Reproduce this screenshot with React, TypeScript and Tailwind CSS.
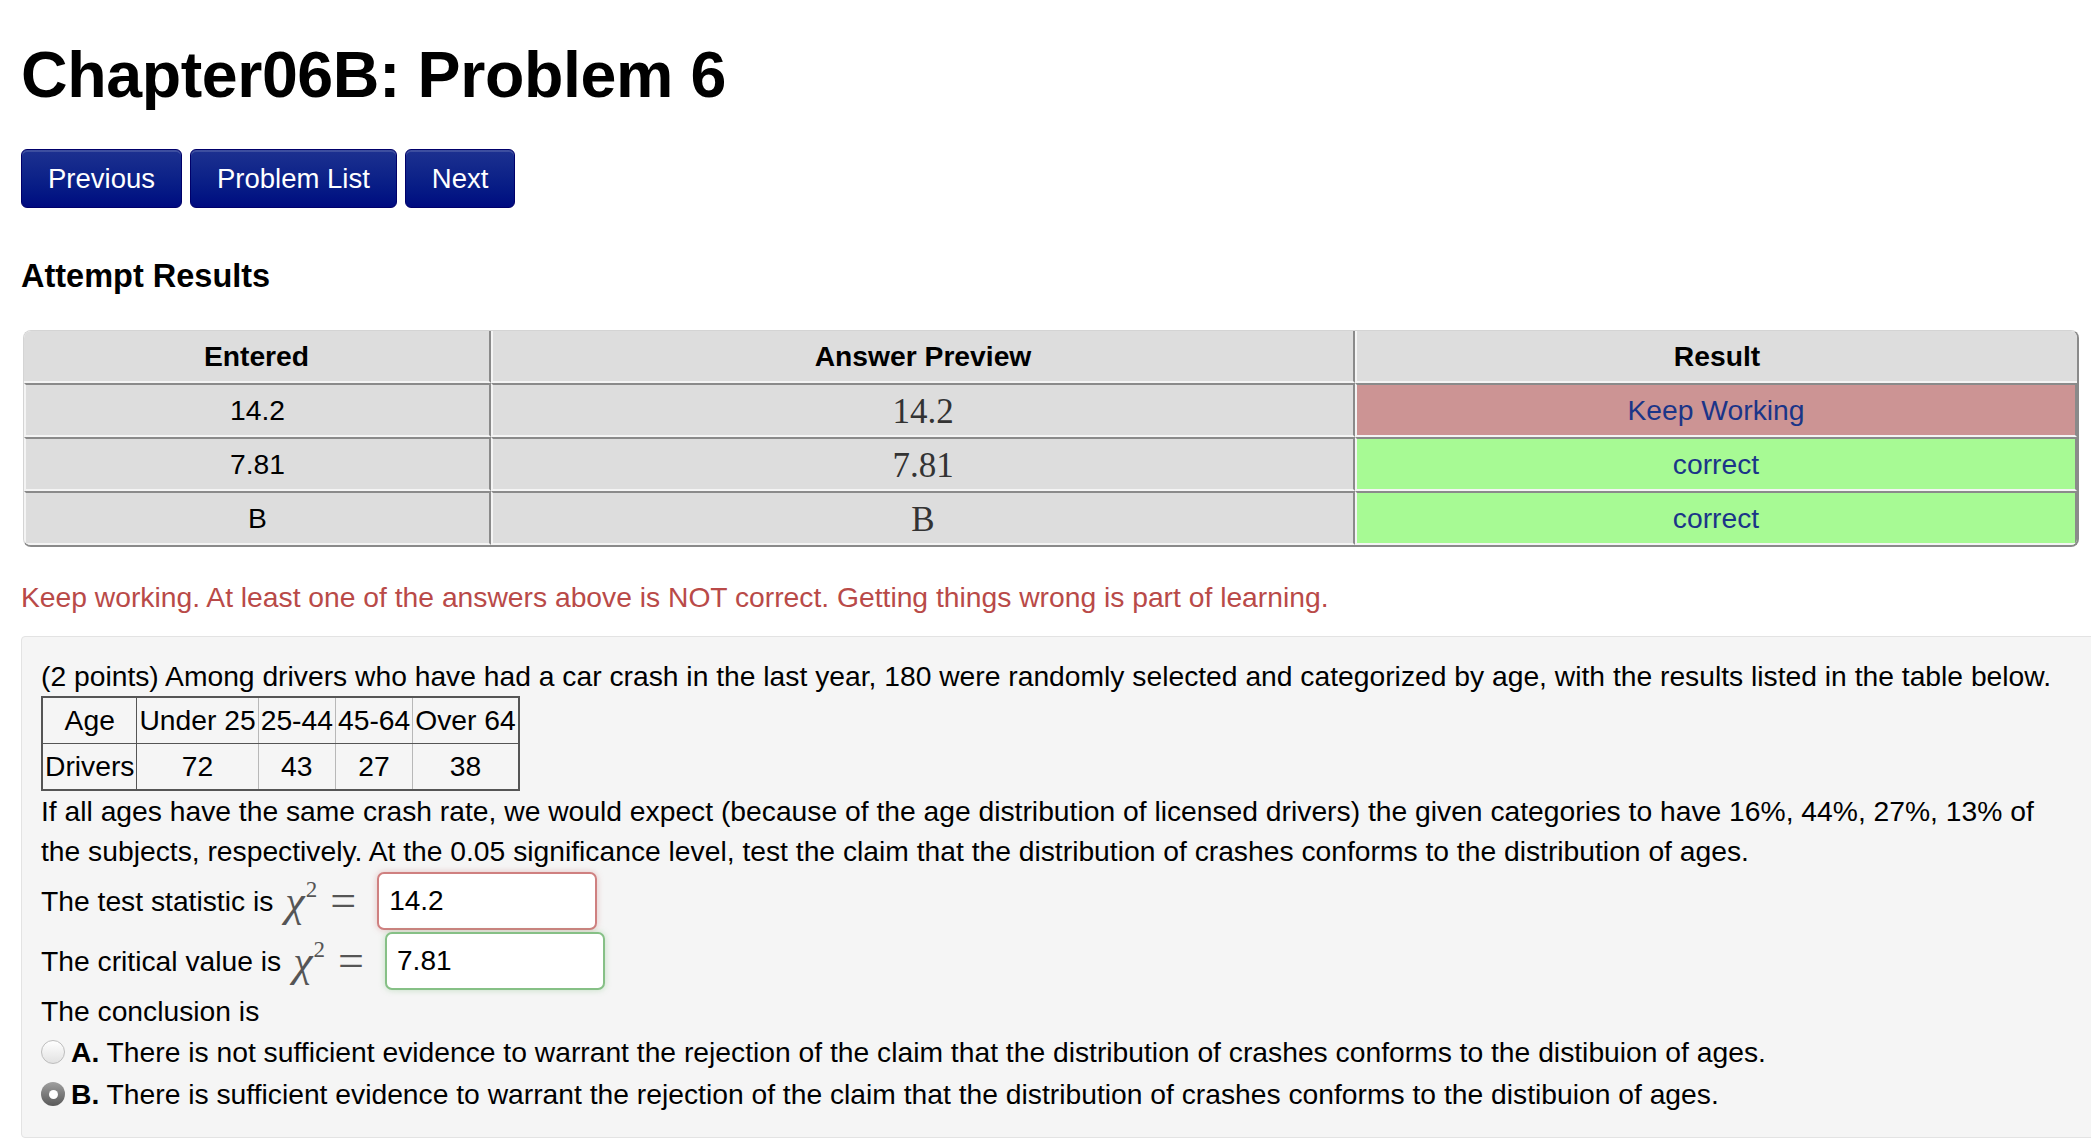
import React from 'react'

const cell = "border-t-2 border-r-2 border-b-2 border-l-2 border-t-[#8a8a8a] border-r-[#8a8a8a] border-b-[#f4f4f4] border-l-[#f4f4f4] text-center"

function Chi() {
  return (
    <span className="font-['Liberation_Serif',serif] text-[#555] ml-[12px] mr-[21px] inline-flex items-baseline">
      <i className="text-[44px] leading-[40px]">χ</i>
      <span className="text-[23px] leading-[22px] relative -top-[19px] ml-[1px]">2</span>
      <span className="text-[46px] leading-[40px] ml-[13px]">=</span>
    </span>
  )
}

function Radio({ checked }: { checked?: boolean }) {
  if (checked) {
    return (
      <span className="inline-flex w-[24px] h-[24px] rounded-full bg-gradient-to-b from-[#a0a0a0] to-[#5a5a5a] items-center justify-center mr-[6px] shrink-0">
        <span className="w-[9px] h-[9px] rounded-full bg-white" />
      </span>
    )
  }
  return <span className="inline-block w-[24px] h-[24px] rounded-full border border-[#bdbdbd] bg-gradient-to-b from-[#ffffff] to-[#e2e2e2] mr-[6px] shrink-0" />
}

export default function App() {
  const rows = [
    { entered: "14.2", preview: "14.2", result: "Keep Working", bad: true },
    { entered: "7.81", preview: "7.81", result: "correct", bad: false },
    { entered: "B", preview: "B", result: "correct", bad: false },
  ]
  const ages = ["Age", "Under 25", "25-44", "45-64", "Over 64"]
  const drivers = ["Drivers", "72", "43", "27", "38"]

  return (
    <div className="min-h-screen bg-white font-['Liberation_Sans',Arial,sans-serif] text-[28.25px] leading-[40px] text-black pl-[21px] overflow-hidden">
      <h1 className="pt-[40px] text-[64.5px] leading-[70px] font-bold tracking-[-0.4px]">Chapter06B: Problem 6</h1>

      <div className="flex gap-[8px] mt-[39px]">
        {["Previous", "Problem List", "Next"].map((b) => (
          <button key={b} className="h-[59px] px-[26px] rounded-[6px] border border-[#00006a] bg-gradient-to-b from-[#1d3190] to-[#000a80] text-white text-[27.5px] shadow-[inset_0_2px_0_rgba(255,255,255,0.15)]">
            {b}
          </button>
        ))}
      </div>

      <h3 className="mt-[50px] text-[32.5px] leading-[36px] font-bold">Attempt Results</h3>

      <div className="mt-[36px] w-[2056px] ml-[2px] rounded-[8px] border-t border-l border-r-2 border-b-2 border-t-[#d4d4d4] border-l-[#d4d4d4] border-r-[#8a8a8a] border-b-[#8a8a8a] overflow-hidden">
        <table className="w-full table-fixed border-separate border-spacing-0">
          <colgroup>
            <col className="w-[467px]" />
            <col className="w-[864px]" />
            <col />
          </colgroup>
          <thead>
            <tr className="h-[52px] bg-[#dddddd]">
              <th className="font-bold border-r-2 border-b-2 border-r-[#8a8a8a] border-b-[#f4f4f4]">Entered</th>
              <th className="font-bold border-r-2 border-l-2 border-b-2 border-l-[#f4f4f4] border-r-[#8a8a8a] border-b-[#f4f4f4]">Answer Preview</th>
              <th className="font-bold border-l-2 border-b-2 border-l-[#f4f4f4] border-b-[#f4f4f4]">Result</th>
            </tr>
          </thead>
          <tbody>
            {rows.map((r, i) => (
              <tr key={i} className="h-[54px]">
                <td className={cell + " bg-[#dddddd]"}>{r.entered}</td>
                <td className={cell + " bg-[#dddddd] font-['Liberation_Serif',serif] text-[35px] text-[#333] pt-[3px]"}>{r.preview}</td>
                <td className={cell + (r.bad ? " bg-[#cc9494]" : " bg-[#a7fa94]") + " text-[#1b3588]"}>{r.result}</td>
              </tr>
            ))}
          </tbody>
        </table>
      </div>

      <p className="mt-[30px] text-[#b94a48]">Keep working. At least one of the answers above is NOT correct. Getting things wrong is part of learning.</p>

      <div className="mt-[19px] bg-[#f5f5f5] border border-[#e3e3e3] rounded-[4px] pt-[19px] pb-[22px] pl-[19px] pr-[19px] w-[2080px]">
        <div>(2 points) Among drivers who have had a car crash in the last year, 180 were randomly selected and categorized by age, with the results listed in the table below.</div>
        <table className="border-collapse border-2 border-[#555] leading-[45px]">
          <tbody>
            {[ages, drivers].map((row, i) => (
              <tr key={i}>
                {row.map((c, j) => (
                  <td key={j} className={"border border-[#b8b8b8] text-center px-[2px] " + (j === 0 ? "border-r-[#555]" : "") + (i === 0 ? " border-b-[#555]" : "")}>
                    {j === 0 && i === 0 ? <span className="px-[13px]">{c}</span> : c}
                  </td>
                ))}
              </tr>
            ))}
          </tbody>
        </table>
        <div className="max-w-[2010px]">If all ages have the same crash rate, we would expect (because of the age distribution of licensed drivers) the given categories to have 16%, 44%, 27%, 13% of the subjects, respectively. At the 0.05 significance level, test the claim that the distribution of crashes conforms to the distribution of ages.</div>

        <div className="flex items-center h-[60px]">
          <span>The test statistic is</span>
          <Chi />
          <input readOnly value="14.2" className="w-[220px] h-[58px] rounded-[7px] bg-white border-2 border-[#cf8080] px-[10px] text-[28px] shadow-[0_0_6px_rgba(200,100,100,0.35)] outline-none" />
        </div>
        <div className="flex items-center h-[60px]">
          <span>The critical value is</span>
          <Chi />
          <input readOnly value="7.81" className="w-[220px] h-[58px] rounded-[7px] bg-white border-2 border-[#86c086] px-[10px] text-[28px] shadow-[0_0_6px_rgba(100,180,100,0.35)] outline-none" />
        </div>
        <div>The conclusion is</div>
        <div className="h-[42px] flex items-center">
          <Radio />
          <span><b>A.</b> There is not sufficient evidence to warrant the rejection of the claim that the distribution of crashes conforms to the distibuion of ages.</span>
        </div>
        <div className="h-[42px] flex items-center">
          <Radio checked />
          <span><b>B.</b> There is sufficient evidence to warrant the rejection of the claim that the distribution of crashes conforms to the distibuion of ages.</span>
        </div>
      </div>
    </div>
  )
}
